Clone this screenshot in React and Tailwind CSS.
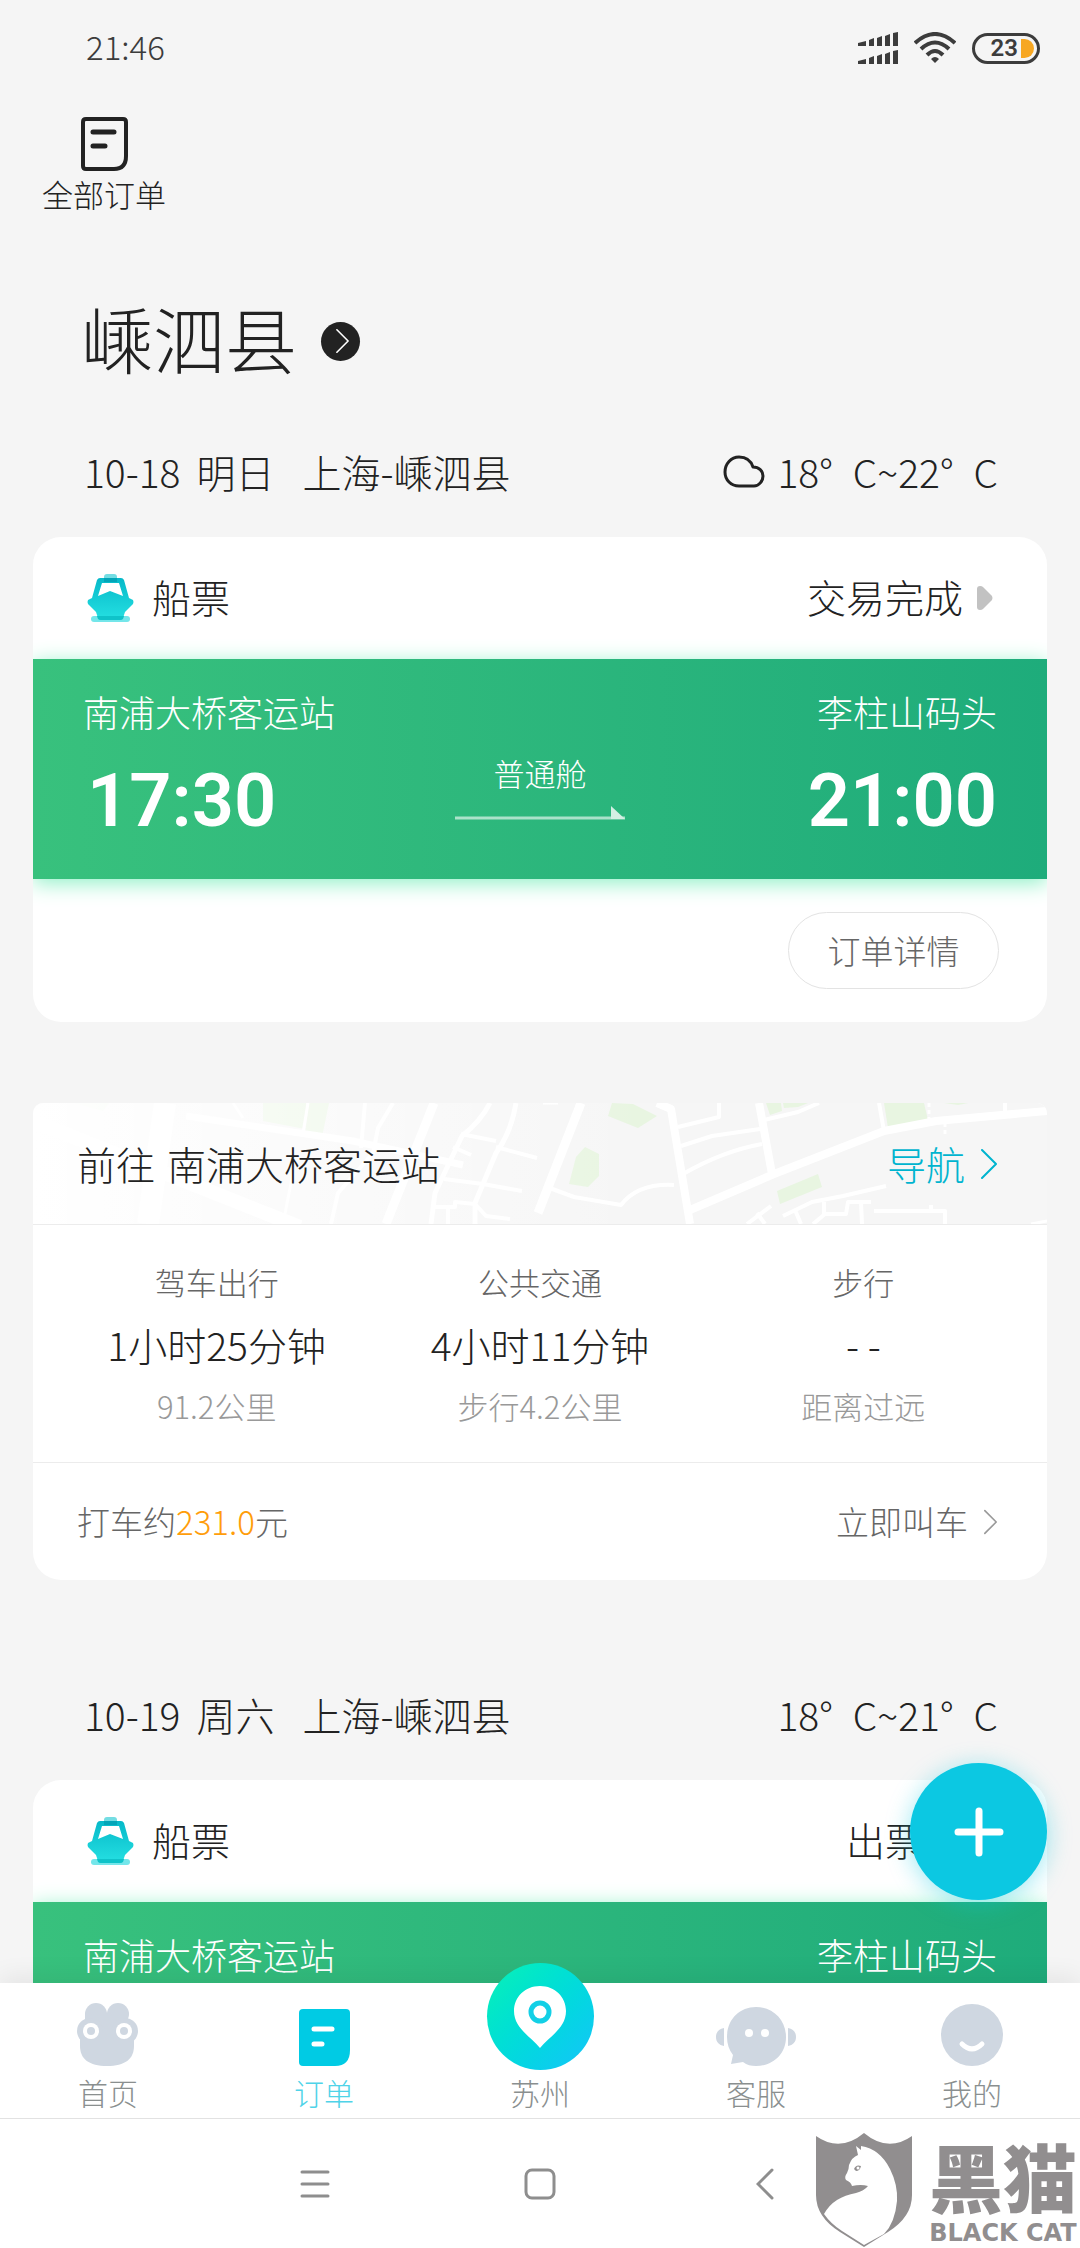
import React from "react";

const NAV_ITEMS = [
  { label: "首页", icon: FrogIcon },
  { label: "订单", icon: OrderIcon, active: true },
  { label: "苏州", center: true },
  { label: "客服", icon: ServiceIcon },
  { label: "我的", icon: MineIcon },
];

const ROUTES = [
  { type: "驾车出行", time: "1小时25分钟", note: "91.2公里" },
  { type: "公共交通", time: "4小时11分钟", note: "步行4.2公里" },
  { type: "步行", time: "- -", note: "距离过远" },
];

function FrogIcon() {
  return (
    <svg width="62" height="63" viewBox="0 0 62 63" fill="#cfd7e1">
      <circle cx="19" cy="11" r="11" />
      <circle cx="41" cy="11" r="11" />
      <rect x="8" y="10" width="43" height="25" />
      <circle cx="13" cy="28" r="13" />
      <circle cx="48" cy="28" r="13" />
      <path d="M3 30H57V43C57 56 48 63 30 63S3 56 3 43Z" />
      <circle cx="14" cy="28" r="8" fill="#fff" />
      <circle cx="47" cy="28" r="8" fill="#fff" />
      <circle cx="14" cy="28" r="4" />
      <circle cx="47" cy="28" r="4" />
    </svg>
  );
}

function OrderIcon() {
  return (
    <svg width="51" height="57" viewBox="0 0 51 57">
      <path d="M4 0H47Q51 0 51 4V41Q51 57 36 57H4Q0 57 0 53V4Q0 0 4 0Z" fill="#00cbe4" />
      <path d="M15 20H33M15 35H23" stroke="#fff" strokeWidth="5" strokeLinecap="round" />
    </svg>
  );
}

function ServiceIcon() {
  return (
    <svg width="80" height="59" viewBox="0 0 80 59" fill="#cfd7e1">
      <path d="M8 21V39C3 38 0 35 0 30S3 22 8 21ZM72 21V39C77 38 80 35 80 30S77 22 72 21Z" />
      <path d="M40 0C57 0 70 13 70 30S57 59 40 59C35 59 31 58 27 55L15 57L17 48C13 43 11 37 11 30C11 13 23 0 40 0Z" />
      <circle cx="33" cy="26" r="4" fill="#fff" />
      <circle cx="49" cy="26" r="4" fill="#fff" />
    </svg>
  );
}

function MineIcon() {
  return (
    <svg width="62" height="62" viewBox="0 0 62 62">
      <circle cx="31" cy="31" r="31" fill="#cfd7e1" />
      <path d="M21 40Q31 50 41 40" fill="none" stroke="#fff" strokeWidth="5" strokeLinecap="round" />
    </svg>
  );
}

function ShipIcon() {
  return (
    <svg width="47" height="48" viewBox="0 0 47 48">
      <defs>
        <linearGradient id="ship" x1="0" y1="0" x2="0" y2="1">
          <stop offset="0" stopColor="#06b9c9" />
          <stop offset="1" stopColor="#25e0e2" />
        </linearGradient>
      </defs>
      <rect x="17" y="0" width="13" height="9" rx="3" fill="#74dde3" />
      <rect x="4" y="42" width="39" height="6" rx="3" fill="#74e6ea" />
      <path
        d="M13 4H34Q36 4 37 6L42 24L46 26Q47 28 46 30L38 38L36 44Q35 46 33 46H14Q12 46 11 44L9 38L1 30Q0 28 1 26L5 24L10 6Q11 4 13 4ZM15 9L11 22L23 17L36 22L32 9Z"
        fill="url(#ship)"
        fillRule="evenodd"
      />
      <path d="M17 4H30V8H17Z" fill="#03a5b8" />
      <path d="M10 42H37L36 45Q35 46 33 46H14Q12 46 11 45Z" fill="#0fc3c9" />
    </svg>
  );
}

function Chevron({ className }) {
  return (
    <svg className={className} viewBox="0 0 16 30" fill="none" stroke="currentColor" strokeWidth="2" strokeLinecap="round" strokeLinejoin="round">
      <path d="M1 1L15 15L1 29" />
    </svg>
  );
}

function MapBackground() {
  return (
    <svg className="absolute inset-0 h-full w-full" viewBox="0 0 1014 121" preserveAspectRatio="xMaxYMid slice" fill="none">
      <defs>
        <linearGradient id="mapFade" x1="0" y1="0" x2="1" y2="0">
          <stop offset="0" stopColor="#fff" />
          <stop offset="0.6" stopColor="#fff" stopOpacity="0" />
        </linearGradient>
      </defs>
      <rect width="1014" height="121" fill="#f6f6f6" />
      <g fill="#e8f5e1">
        <path d="M579 0L600 1L624 13L605 25L575 13Z" />
        <path d="M552 44L566 51V73L555 84L536 81L543 54Z" />
        <path d="M744 88L785 71L789 84L747 101Z" />
        <path d="M851 0H891L895 17L855 25Z" />
        <path d="M733 0H748L749 8L737 12ZM750 0H775L765 4L751 5Z" />
        <path d="M911 0H935L925 2Z" />
        <path d="M230 0H273L272 26L230 18ZM276 0H296L289 34L272 31Z" />
        <path d="M40 0H76L70 8Z" />
      </g>
      <g stroke="#fff" strokeLinejoin="round">
        <path d="M132 0L115 121" strokeWidth="22" />
        <path d="M0 18L267 124" strokeWidth="14" />
        <path d="M153 13L320 38L430 62" strokeWidth="7" />
        <path d="M401 0L353 121M548 0L505 110" strokeWidth="9" />
        <path d="M624 0L638 6L657 121M657 107L741 71L851 28L903 18L1014 8M726 0L739 71" strokeWidth="8" />
        <path d="M332 0L328 45M360 0L345 25L340 50L305 90L298 121" strokeWidth="4" />
        <path d="M457 0Q448 18 429 33L402 90L398 121M483 0Q478 30 463 50L442 100V121" strokeWidth="5" />
        <path d="M428 31L463 38M420 44L438 52M463 44L504 55M411 76L450 81L489 88M398 104H422V99L442 101L453 113L477 116M415 104V121" strokeWidth="4" />
        <path d="M275 0L270 30M260 70L250 121M200 0L210 15M510 0H525" strokeWidth="3" />
        <path d="M851 28L846 0M645 24L686 14V0M648 43L679 33L727 26M650 71Q690 48 729 41M731 17L765 9L786 0" strokeWidth="4" />
        <path d="M514 84L541 94L588 102Q605 80 641 82M750 113L779 99L810 93L853 83M714 121L738 103M724 110L732 121M762 107L768 121M791 99V111H813L815 99H838M828 99L829 121M780 121L792 111M841 108H912V121M898 102V108M972 0V10" strokeWidth="4" />
        <path d="M896 0V16M912 20V34" strokeWidth="3" strokeDasharray="4 3" />
        <path d="M998 121L1014 118" strokeWidth="3" />
      </g>
      <rect width="1014" height="121" fill="url(#mapFade)" />
    </svg>
  );
}

function DateRow({ date, day, route, low, high, cloudy }) {
  return (
    <div className="flex items-center justify-between pb-[38px] pl-[84px] pr-[82px] text-[39px] leading-[56px]">
      <h2 className="flex">
        <span className="mr-4">{date}</span>
        <span className="mr-7">{day}</span>
        <span>{route}</span>
      </h2>
      <p className="flex items-center gap-3">
        {cloudy && (
          <svg width="42" height="33" viewBox="0 0 42 33" fill="none" stroke="#222" strokeWidth="3">
            <path d="M16 2C23 2 28 6 30 12C36 12 40 16 40 21S36 31 31 31H16C8 31 2 25 2 17S8 2 16 2Z" strokeLinejoin="round" />
          </svg>
        )}
        <span className="flex gap-5">
          <span>{low}°</span>
          <span>C~{high}°</span>
          <span>C</span>
        </span>
      </p>
    </div>
  );
}

function TicketCard({ status, from, to, depart, arrive, cabin }) {
  return (
    <section className="mx-[33px] overflow-hidden rounded-[28px] bg-white">
      <div className="flex h-[122px] items-center justify-between px-[54px]">
        <div className="flex items-center gap-[18px]">
          <ShipIcon />
          <h3 className="pb-1 text-[39px] leading-[56px]">船票</h3>
        </div>
        <button type="button" className="flex items-center gap-[14px] pb-1 text-[39px] leading-[56px]">
          {status}
          <svg className="mt-1" width="16" height="24" viewBox="0 0 16 24" fill="#c2c2c2">
            <path d="M0 3Q0 0 3 0Q5 0 6 1L15 10Q16 12 15 14L6 23Q5 24 3 24Q0 24 0 21Z" />
          </svg>
        </button>
      </div>
      <div className="grid h-[220px] grid-cols-[1fr_auto_1fr] bg-linear-to-r from-[#38c17d] to-[#1eac7b] px-[50px] pt-[25px] text-white shadow-[0_4px_20px_#8df0c6]">
        <div>
          <p className="text-[36px] leading-[54px]">{from}</p>
          {depart && <p className="mt-6 pl-1 font-[Roboto] text-[74px] font-semibold leading-[78px]">{depart}</p>}
        </div>
        <div className="flex w-[170px] flex-col items-center pt-[66px]">
          {cabin && (
            <>
              <p className="text-[31px] leading-[46px]">{cabin}</p>
              <svg className="mt-[10px]" width="170" height="14" viewBox="0 0 170 14">
                <path d="M0 12H170" stroke="#fff" strokeOpacity="0.6" strokeWidth="3" />
                <path d="M156 0L170 13H156Z" fill="#d3efe3" />
              </svg>
            </>
          )}
        </div>
        <div className="text-right">
          <p className="text-[36px] leading-[54px]">{to}</p>
          {arrive && <p className="mt-6 font-[Roboto] text-[74px] font-semibold leading-[78px]">{arrive}</p>}
        </div>
      </div>
      {arrive && (
        <div className="flex justify-end px-12 py-[33px]">
          <button type="button" className="h-[77px] w-[211px] rounded-full border border-[#e3e3e3] text-[33px] text-[#666]">
            订单详情
          </button>
        </div>
      )}
    </section>
  );
}

function RouteCard() {
  return (
    <section className="mx-[33px] mt-[81px] overflow-hidden rounded-t-[10px] rounded-b-[28px] bg-white">
      <div className="relative h-[122px] border-b border-[#ececec]">
        <MapBackground />
        <div className="relative flex h-full items-center justify-between pl-11 pr-[50px] text-[39px]">
          <h3 className="flex gap-3">
            <span>前往</span>
            <span>南浦大桥客运站</span>
          </h3>
          <a href="#navigate" className="flex items-center gap-4 text-[#00b4cf]">
            导航
            <Chevron className="h-[30px] w-4" />
          </a>
        </div>
      </div>
      <div className="grid h-[238px] grid-cols-3 border-b border-[#ececec] px-[22px] pt-[34px] text-center">
        {ROUTES.map((item) => (
          <div key={item.type}>
            <p className="text-[31px] leading-[46px] text-[#666]">{item.type}</p>
            <p className="my-1 text-[39px] leading-[70px]">{item.time}</p>
            <p className="text-[31px] leading-[46px] text-[#999]">{item.note}</p>
          </div>
        ))}
      </div>
      <div className="flex h-[117px] items-center justify-between pl-11 pr-[50px] text-[33px] text-[#666]">
        <p>
          打车约<span className="text-[#ff9d0a]">231.0</span>元
        </p>
        <a href="#taxi" className="flex items-center gap-4">
          立即叫车
          <Chevron className="h-[26px] w-[13px] text-[#999]" />
        </a>
      </div>
    </section>
  );
}

function StatusBar() {
  return (
    <div className="flex h-24 items-center justify-between pl-[86px] pr-10 text-[#3c3c3c]">
      <span className="pb-1 text-[33px] leading-[46px]">21:46</span>
      <div className="flex items-center gap-4">
        <svg width="40" height="32" viewBox="0 0 40 32" fill="#3c3c3c">
          <path d="M0 11L8 9V14H0ZM11 8L16 6V14H11ZM19 6L24 4V14H19ZM27 4L32 2V14H27ZM35 1L40 0V14H35Z" />
          <path d="M0 29L8 27V32H0ZM11 26L16 24V32H11ZM19 24L24 22V32H19ZM27 22L32 20V32H27ZM35 19L40 18V32H35Z" />
        </svg>
        <svg width="42" height="32" viewBox="0 0 42 32" fill="none" stroke="#3c3c3c" strokeWidth="4">
          <path d="M1 11Q21 -7 41 11M7 17Q21 4 35 17M13 23Q21 15 29 23" />
          <path d="M17 27Q21 23 25 27L21 31Z" fill="#3c3c3c" stroke="none" />
        </svg>
        <div className="flex h-[31px] w-[68px] items-center justify-end gap-[3px] rounded-full border-3 border-[#3c3c3c] pr-[3px]">
          <span className="font-[Roboto] text-[24px] font-semibold leading-none">23</span>
          <span className="h-[19px] w-[13px] rounded-l-[2px] rounded-r-full bg-[#f7a722]" />
        </div>
      </div>
    </div>
  );
}

function TabBar() {
  return (
    <nav className="relative grid h-[135px] grid-cols-5 bg-white shadow-[0_-6px_24px_rgba(0,0,0,0.07)]">
      {NAV_ITEMS.map(({ label, icon: Icon, active, center }) => (
        <a
          key={label}
          href={`#${label}`}
          className={
            active
              ? "flex flex-col items-center text-[30px] leading-[44px] text-[#4fd3e8]"
              : "flex flex-col items-center text-[30px] leading-[44px] text-[#8a8f8f]"
          }
        >
          {center ? (
            <span className="-mt-5 flex h-[107px] w-[107px] items-center justify-center rounded-full bg-linear-to-br from-[#0df2b4] to-[#16c3fa]">
              <svg width="53" height="62" viewBox="0 0 53 62">
                <path d="M26 0C41 0 52 11 52 25C52 42 36 50 26 62C16 50 0 42 0 25C0 11 11 0 26 0Z" fill="#fff" />
                <circle cx="26" cy="26" r="9" fill="#fff" stroke="#13d0e6" strokeWidth="5" />
              </svg>
            </span>
          ) : (
            <span className="flex h-[87px] items-end pb-1">
              <Icon />
            </span>
          )}
          {label}
        </a>
      ))}
    </nav>
  );
}

function SystemBar() {
  return (
    <div className="relative h-[130px] border-t border-[#e2e2e2] bg-white">
      <div className="mx-auto grid h-full w-[675px] grid-cols-3 place-items-center">
        <button type="button" aria-label="菜单">
          <svg width="30" height="28" viewBox="0 0 30 28" stroke="#8e8e8e" strokeWidth="3" strokeLinecap="round">
            <path d="M2 2H28M2 14H28M2 26H28" />
          </svg>
        </button>
        <button type="button" aria-label="主页">
          <svg width="32" height="32" viewBox="0 0 32 32" fill="none" stroke="#8e8e8e" strokeWidth="3">
            <rect x="2" y="2" width="28" height="28" rx="6" />
          </svg>
        </button>
        <button type="button" aria-label="返回">
          <svg width="18" height="32" viewBox="0 0 18 32" fill="none" stroke="#8e8e8e" strokeWidth="3" strokeLinecap="round">
            <path d="M16 2L2 16L16 30" />
          </svg>
        </button>
      </div>
      <div className="absolute right-[3px] bottom-0 flex items-end gap-4 text-[#918e8f]">
        <svg width="98" height="115" viewBox="0 0 98 115">
          <path d="M1 3Q25 20 49 0Q73 20 97 3V62Q97 84 73 99L49 114L25 99Q1 84 1 62Z" fill="#918e8f" />
          <path
            d="M41 13L46 17V13Q65 16 75 36Q83 52 82 68Q80 90 69 101L49 112L27 98Q16 91 9 81Q14 72 22 67Q30 62 41 60Q49 58 53 53Q46 51 37 53Q36 49 31 47Q29 44 32 40Q34 36 34 32Q37 24 43 22Z"
            fill="#fff"
          />
          <path d="M39 36Q41 31 46 33Q45 38 41 38Z" fill="#918e8f" />
          <circle cx="43" cy="35" r="1.5" fill="#fff" />
        </svg>
        <div className="flex flex-col items-center">
          <span className="text-[74px] font-black leading-[86px]">黑猫</span>
          <span className="font-['DejaVu_Sans'] text-[24px] font-bold leading-[30px]">BLACK CAT</span>
        </div>
      </div>
    </div>
  );
}

export default function App() {
  return (
    <div className="flex h-screen flex-col bg-[#f5f5f5] font-['Noto_Sans_CJK_SC',sans-serif] font-light text-[#222]">
      <StatusBar />
      <main className="min-h-0 flex-1 overflow-hidden">
        <button type="button" className="ml-[42px] mt-[21px] flex flex-col items-center text-[31px] leading-[46px]">
          <svg width="47" height="54" viewBox="0 0 47 54" fill="none" stroke="#222" strokeWidth="4" strokeLinecap="round">
            <path d="M5 2H42Q45 2 45 5V39Q45 52 33 52H5Q2 52 2 49V5Q2 2 5 2Z" />
            <path d="M12 15H33M12 29H24" strokeWidth="5" />
          </svg>
          <span>全部订单</span>
        </button>
        <div className="mt-[70px] flex items-center gap-6 pl-[81px]">
          <h1 className="text-[72px] leading-[100px]">嵊泗县</h1>
          <button type="button" aria-label="切换目的地" className="mt-2 flex h-[39px] w-[39px] items-center justify-center rounded-full bg-[#222] text-white">
            <Chevron className="ml-1 h-6 w-[13px]" />
          </button>
        </div>
        <div className="mt-14">
          <DateRow date="10-18" day="明日" route="上海-嵊泗县" low="18" high="22" cloudy />
          <TicketCard status="交易完成" from="南浦大桥客运站" to="李柱山码头" depart="17:30" arrive="21:00" cabin="普通舱" />
        </div>
        <RouteCard />
        <div className="mt-[106px]">
          <DateRow date="10-19" day="周六" route="上海-嵊泗县" low="18" high="21" />
          <TicketCard status="出票中" from="南浦大桥客运站" to="李柱山码头" />
        </div>
      </main>
      <footer className="relative">
        <button
          type="button"
          aria-label="添加行程"
          className="absolute right-[33px] bottom-[348px] flex h-[137px] w-[137px] items-center justify-center rounded-full bg-[#0cc8e2] shadow-[0_4px_24px_rgba(12,200,226,0.4)]"
        >
          <svg width="50" height="50" viewBox="0 0 50 50" stroke="#fff" strokeWidth="7" strokeLinecap="round">
            <path d="M4 25H46M25 4V46" />
          </svg>
        </button>
        <TabBar />
        <SystemBar />
      </footer>
    </div>
  );
}
